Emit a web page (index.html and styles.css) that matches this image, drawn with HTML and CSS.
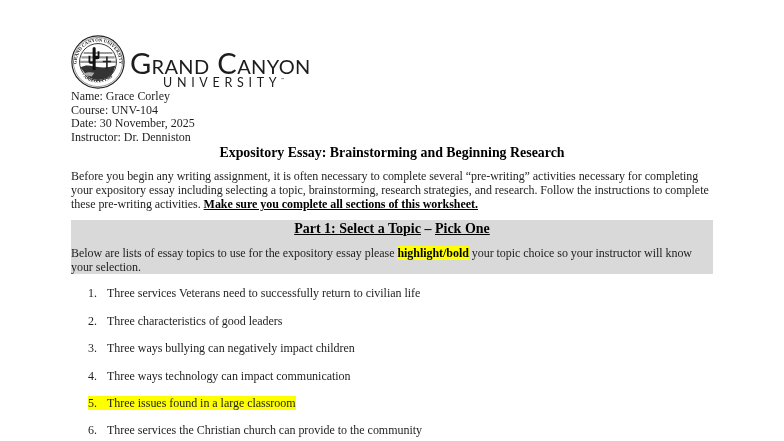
FILE: index.html
```html
<!DOCTYPE html>
<html lang="en">
<head>
<meta charset="utf-8">
<title>Expository Essay Worksheet</title>
<link rel="stylesheet" href="styles.css">
</head>
<body>
<main class="page">
  <header class="logo">
    <svg class="seal" viewBox="0 0 60 60" aria-hidden="true">
      <defs>
        <path id="ring-top" d="M6.500 34a23.700 23.700 0 1 1 47 0"/>
        <path id="ring-bottom" d="M10 42a24 24 0 0 0 40 0"/>
      </defs>
      <circle cx="30" cy="30" r="29" fill="#fff" stroke="#222" stroke-width="1.3"/>
      <circle cx="30" cy="30" r="27.300" fill="none" stroke="#444" stroke-width="0.6"/>
      <text class="seal-text"><textPath href="#ring-top" startOffset="50%" text-anchor="middle">GRAND CANYON UNIVERSITY</textPath></text>
      <text class="seal-text"><textPath href="#ring-bottom" startOffset="50%" text-anchor="middle">ARIZONA 1949</textPath></text>
      <circle cx="30" cy="30" r="20.500" fill="#fff" stroke="#222" stroke-width="1"/>
      <path d="M14 19h32v2H14zM11.500 23.500h37v2.500h-37zM10 28.500h40V31H10z" fill="#9a9a9a"/>
      <path d="M10.500 36c6-3 10-2 15-1s15 2 24-1l-3 8c-5 6-11 8-16.500 8s-12-3-15-8z" fill="#333"/>
      <path d="M12 44c6-3 9-3 14-2l-3 4z" fill="#aaa"/>
      <path d="M24 39V15a1.700 1.700 0 0 1 3.400 0v8h2.200v-5h2v7a2 2 0 0 1-2 2h-2.200v12zM24 32h-2.500a2 2 0 0 1-2-2v-7h2v6.500H24z" fill="#111"/>
      <path d="M39 24h1.800v4.500h3.700v1.800h-3.700V38H39v-7.700h-3.700v-1.800H39z" fill="#222"/>
    </svg>
    <div class="wordmark">
      <div class="wordmark-top">Grand Canyon</div>
      <div class="wordmark-sub">UNIVERSITY<sup class="tm">™</sup></div>
    </div>
  </header>

  <section class="meta">
    <div>Name: Grace Corley</div>
    <div>Course: UNV-104</div>
    <div>Date: 30 November, 2025</div>
    <div>Instructor: Dr. Denniston</div>
  </section>

  <h1 class="title">Expository Essay: Brainstorming and Beginning Research</h1>

  <p class="intro">Before you begin any writing assignment, it is often necessary to complete several “pre-writing” activities necessary for completing<br>your expository essay including selecting a topic, brainstorming, research strategies, and research. Follow the instructions to complete<br>these pre-writing activities. <strong class="underlined">Make sure you complete all sections of this worksheet.</strong></p>

  <section class="shaded">
    <h2 class="part"><span class="underlined">Part 1: Select a Topic</span> – <span class="underlined">Pick One</span></h2>
    <p class="shaded-text">Below are lists of essay topics to use for the expository essay please <strong class="mark">highlight/bold</strong> your topic choice so your instructor will know<br>your selection.</p>
  </section>

  <ol class="topics">
    <li><span class="num">1.</span>Three services Veterans need to successfully return to civilian life</li>
    <li><span class="num">2.</span>Three characteristics of good leaders</li>
    <li><span class="num">3.</span>Three ways bullying can negatively impact children</li>
    <li><span class="num">4.</span>Three ways technology can impact communication</li>
    <li><span class="picked"><span class="num">5.</span>Three issues found in a large classroom</span></li>
    <li><span class="num">6.</span>Three services the Christian church can provide to the community</li>
  </ol>
</main>
</body>
</html>
```

FILE: styles.css
```css
* { box-sizing: border-box; }
html, body { margin: 0; padding: 0; background: #fff; }
body {
  width: 784px;
  height: 441px;
  overflow: hidden;
  font-family: "Liberation Serif", "Times New Roman", serif;
  font-size: 12px;
  color: #1e1e1e;
}
.page { width: 713px; padding: 35px 0 0 71px; filter: blur(0.3px); }
.logo { display: flex; align-items: flex-start; height: 55px; }
.seal { width: 54px; height: 54px; flex: none; }
.seal-text { font-family: "Liberation Serif", serif; font-size: 5.2px; font-weight: bold; fill: #222; }
.wordmark { margin: 14px 0 0 5px; width: 182px; color: #1c1c1c; }
.wordmark-top {
  font-family: "Lato", sans-serif;
  font-variant: small-caps;
  font-size: 29.1px;
  line-height: 28px;
  letter-spacing: 0.35px;
  white-space: nowrap;
}
.wordmark-sub {
  font-family: "Lato", sans-serif;
  font-size: 12.5px;
  line-height: 12px;
  letter-spacing: 4.7px;
  padding-left: 33px;
  white-space: nowrap;
}
.tm { font-size: 4px; letter-spacing: 0; vertical-align: top; line-height: 6px; }
.meta { line-height: 13.6px; letter-spacing: -0.02px; }
.title { font-size: 13.9px; line-height: 15px; font-weight: bold; text-align: center; margin: 1px 0 0; color: #000; }
.intro { margin: 9px 0 0; line-height: 14px; white-space: nowrap; letter-spacing: -0.045px; }
.underlined { text-decoration: underline; color: #000; }
.shaded { background: #d9d9d9; height: 54px; margin-top: 9px; padding-top: 1px; }
.part { font-size: 14px; line-height: 16px; font-weight: bold; text-align: center; margin: 0; color: #000; }
.shaded-text { margin: 10px 0 0; line-height: 13.4px; white-space: nowrap; letter-spacing: -0.045px; }
.mark { background: #ffff00; color: #000; }
.topics { list-style: none; margin: 12px 0 0; padding: 0 0 0 17px; }
.topics li { line-height: 14px; margin-bottom: 13.4px; white-space: nowrap; letter-spacing: -0.03px; }
.num { display: inline-block; width: 19px; }
.picked { background: #ffff00; display: inline-block; }
```
